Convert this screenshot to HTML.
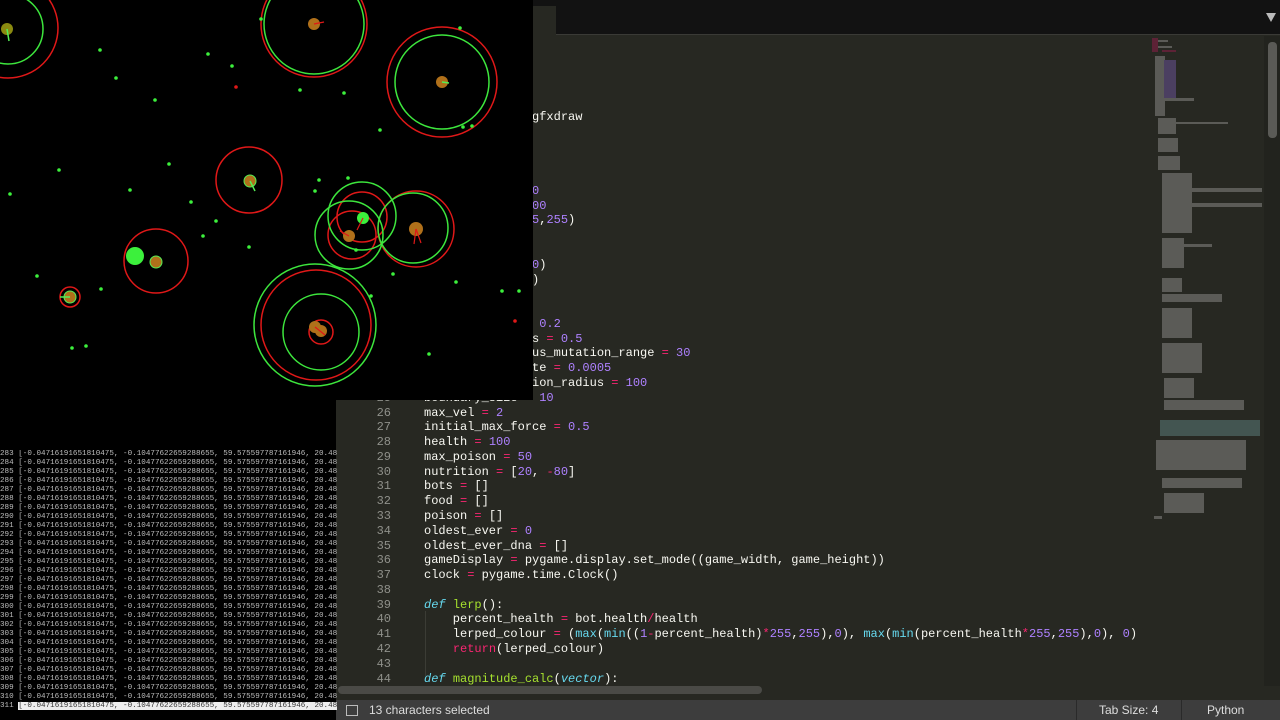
<!DOCTYPE html>
<html><head><meta charset="utf-8"><style>
*{margin:0;padding:0;box-sizing:border-box}
body{width:1280px;height:720px;overflow:hidden;background:#000;position:relative;font-family:"Liberation Mono",monospace}
#ed{position:absolute;left:336px;top:0;width:944px;height:720px;background:#272822}
#tabs{position:absolute;left:336px;top:0;width:944px;height:35px;background:#121212;border-bottom:1px solid #3a3a36}
#tab{position:absolute;left:190px;top:6px;width:30px;height:30px;background:#272822;border-radius:8px 0 0 0}
#arrow{position:absolute;right:4px;top:13px;width:0;height:0;border-left:5px solid transparent;border-right:5px solid transparent;border-top:9px solid #bbb}
#gut{position:absolute;left:336px;top:36px;width:55px;text-align:right;font-size:12px;line-height:14.78px;color:#8f908a;white-space:pre}
#code{position:absolute;left:424px;top:36px;font-size:12px;line-height:14.78px;color:#f8f8f2;white-space:pre}
.o{color:#f92672}.n{color:#ae81ff}.k{color:#66d9ef;font-style:italic}.f{color:#a6e22e}.b{color:#66d9ef}
#guide{position:absolute;left:425px;top:611px;width:1px;height:65px;background:#3b3c35}
#hs{position:absolute;left:338px;top:686px;width:424px;height:8px;border-radius:4px;background:#4a4a46}
#status{position:absolute;left:336px;top:700px;width:944px;height:20px;background:#3d3d3d;color:#ddd;font-family:"Liberation Sans",sans-serif;font-size:12px;line-height:20px}
#vs{position:absolute;left:1268px;top:42px;width:9px;height:96px;border-radius:4px;background:#5a5a56}
#vtrack{position:absolute;left:1264px;top:36px;width:16px;height:650px;background:#22231e}
#mini{position:absolute;left:1152px;top:38px;width:112px;height:490px;opacity:.35}
#game{position:absolute;left:0;top:0;width:533px;height:400px;background:#000}
#con{position:absolute;left:0;top:450px;width:337px;font-size:7.6px;line-height:9px;color:#bdbdbd;white-space:pre;overflow:hidden}
#con .sel{background:#eee;color:#333}
</style></head><body>
<div id="ed"></div>
<div id="tabs"><div id="tab"></div><div id="arrow"></div></div>
<div id="gut">1
2
3
4
5
6
7
8
9
10
11
12
13
14
15
16
17
18
19
20
21
22
23
24
25
26
27
28
29
30
31
32
33
34
35
36
37
38
39
40
41
42
43
44</div>
<div id="code"><span class="k">import</span> pygame
<span class="o">import</span> random
<span class="o">import</span> math
<span class="o">import</span> numpy
<span class="o">import</span> time
<span class="o">import</span> pygame, gfxdraw

pygame.init()

size <span class="o">=</span> <span class="n">1</span>
game_width <span class="o">=</span> <span class="n">800</span>
game_height <span class="o">=</span> <span class="n">600</span>
bg_colour <span class="o">=</span> (<span class="n">0</span>,<span class="n">5</span>,<span class="n">255</span>)

fps <span class="o">=</span> <span class="n">60</span>
red <span class="o">=</span> (<span class="n">255</span>,<span class="n">255</span>,<span class="n">0</span>)
green <span class="o">=</span> (<span class="n">0</span>,<span class="n">25</span>,<span class="n">0</span>)


mutation_rate <span class="o">=</span> <span class="n">0.2</span>
mutation_weights <span class="o">=</span> <span class="n">0.5</span>
perception_radius_mutation_range <span class="o">=</span> <span class="n">30</span>
reproduction_rate <span class="o">=</span> <span class="n">0.0005</span>
initial_perception_radius <span class="o">=</span> <span class="n">100</span>
boundary_size <span class="o">=</span> <span class="n">10</span>
max_vel <span class="o">=</span> <span class="n">2</span>
initial_max_force <span class="o">=</span> <span class="n">0.5</span>
health <span class="o">=</span> <span class="n">100</span>
max_poison <span class="o">=</span> <span class="n">50</span>
nutrition <span class="o">=</span> [<span class="n">20</span>, <span class="o">-</span><span class="n">80</span>]
bots <span class="o">=</span> []
food <span class="o">=</span> []
poison <span class="o">=</span> []
oldest_ever <span class="o">=</span> <span class="n">0</span>
oldest_ever_dna <span class="o">=</span> []
gameDisplay <span class="o">=</span> pygame.display.set_mode((game_width, game_height))
clock <span class="o">=</span> pygame.time.Clock()

<span class="k">def</span> <span class="f">lerp</span>():
    percent_health <span class="o">=</span> bot.health<span class="o">/</span>health
    lerped_colour <span class="o">=</span> (<span class="b">max</span>(<span class="b">min</span>((<span class="n">1</span><span class="o">-</span>percent_health)<span class="o">*</span><span class="n">255</span>,<span class="n">255</span>),<span class="n">0</span>), <span class="b">max</span>(<span class="b">min</span>(percent_health<span class="o">*</span><span class="n">255</span>,<span class="n">255</span>),<span class="n">0</span>), <span class="n">0</span>)
    <span class="o">return</span>(lerped_colour)

<span class="k">def</span> <span class="f">magnitude_calc</span>(<span class="k">vector</span>):</div>
<div id="guide"></div>
<div id="vtrack"></div><div id="vs"></div>
<svg id="mini" viewBox="0 0 112 490">
<g fill="#bbb">
<rect x="0" y="0" width="6" height="14" fill="#c2185b"/><rect x="6" y="2" width="10" height="2"/><rect x="6" y="8" width="14" height="2"/><rect x="10" y="12" width="14" height="2" fill="#c2185b"/>
<rect x="3" y="18" width="10" height="60"/><rect x="12" y="22" width="12" height="40" fill="#8e6bd6"/><rect x="12" y="60" width="30" height="3"/>
<rect x="6" y="80" width="18" height="16"/><rect x="16" y="84" width="60" height="2"/>
<rect x="6" y="100" width="20" height="14"/><rect x="6" y="118" width="22" height="14"/>
<rect x="10" y="135" width="30" height="60"/><rect x="30" y="150" width="80" height="4"/><rect x="30" y="165" width="80" height="4"/>
<rect x="10" y="200" width="22" height="30"/><rect x="20" y="206" width="40" height="3"/>
<rect x="10" y="240" width="20" height="14"/><rect x="10" y="256" width="60" height="8"/>
<rect x="10" y="270" width="30" height="30"/><rect x="10" y="305" width="40" height="30"/>
<rect x="12" y="340" width="30" height="20"/><rect x="12" y="362" width="80" height="10"/>
<rect x="8" y="382" width="100" height="16" fill="#7aa"/>
<rect x="4" y="402" width="90" height="30"/><rect x="10" y="440" width="80" height="10"/><rect x="12" y="455" width="40" height="20"/><rect x="2" y="478" width="8" height="3"/>
</g></svg>
<div id="hs"></div>
<div id="status"><span style="position:absolute;left:10px;top:5px;width:12px;height:11px;border:1px solid #bbb"></span><span style="position:absolute;left:33px">13 characters selected</span><span style="position:absolute;left:740px;top:0;width:1px;height:20px;background:#2a2a2a"></span><span style="position:absolute;left:763px">Tab Size: 4</span><span style="position:absolute;left:845px;top:0;width:1px;height:20px;background:#2a2a2a"></span><span style="position:absolute;left:871px">Python</span></div>
<svg id="game" viewBox="0 0 533 400" fill="none" stroke-width="1.5">
<g stroke="#e01818"><circle cx="8" cy="28" r="50"/><circle cx="314" cy="24" r="53"/><circle cx="442" cy="82" r="55"/><circle cx="249" cy="180" r="33"/><circle cx="156" cy="261" r="32"/><circle cx="70" cy="297" r="10"/><circle cx="352" cy="235" r="24"/><circle cx="362" cy="217" r="25"/><circle cx="416" cy="229" r="38"/><circle cx="316" cy="325" r="55"/><circle cx="321" cy="332" r="12"/></g>
<g stroke="#3de63d"><circle cx="8" cy="29" r="35"/><circle cx="314" cy="24" r="50"/><circle cx="442" cy="82" r="47"/><circle cx="349" cy="235" r="34"/><circle cx="362" cy="216" r="34"/><circle cx="413" cy="228" r="35"/><circle cx="315" cy="325" r="61"/><circle cx="321" cy="332" r="38"/></g>
<g fill="#b0701a"><circle cx="7" cy="29" r="6" fill="#8a8a10"/><circle cx="314" cy="24" r="6"/><circle cx="442" cy="82" r="6"/><circle cx="250" cy="181" r="6" stroke="#5e5" stroke-width="1"/><circle cx="156" cy="262" r="6" stroke="#5e5" stroke-width="1"/><circle cx="70" cy="297" r="6" stroke="#5e5" stroke-width="1"/><circle cx="349" cy="236" r="6"/><circle cx="416" cy="229" r="7"/><circle cx="315" cy="327" r="6"/><circle cx="321" cy="331" r="6"/></g>
<g fill="#3cf03c"><circle cx="135" cy="256" r="9"/><circle cx="363" cy="218" r="6"/>
<g><circle cx="100" cy="50" r="1.8"/><circle cx="116" cy="78" r="1.8"/><circle cx="208" cy="54" r="1.8"/><circle cx="232" cy="66" r="1.8"/><circle cx="155" cy="100" r="1.8"/><circle cx="300" cy="90" r="1.8"/><circle cx="344" cy="93" r="1.8"/><circle cx="261" cy="19" r="1.8"/><circle cx="460" cy="28" r="1.8"/><circle cx="380" cy="130" r="1.8"/><circle cx="463" cy="127" r="1.8"/><circle cx="472" cy="126" r="1.8"/><circle cx="59" cy="170" r="1.8"/><circle cx="169" cy="164" r="1.8"/><circle cx="10" cy="194" r="1.8"/><circle cx="130" cy="190" r="1.8"/><circle cx="191" cy="202" r="1.8"/><circle cx="216" cy="221" r="1.8"/><circle cx="203" cy="236" r="1.8"/><circle cx="249" cy="247" r="1.8"/><circle cx="319" cy="180" r="1.8"/><circle cx="348" cy="178" r="1.8"/><circle cx="315" cy="191" r="1.8"/><circle cx="356" cy="250" r="1.8"/><circle cx="393" cy="274" r="1.8"/><circle cx="456" cy="282" r="1.8"/><circle cx="37" cy="276" r="1.8"/><circle cx="101" cy="289" r="1.8"/><circle cx="371" cy="296" r="1.8"/><circle cx="502" cy="291" r="1.8"/><circle cx="72" cy="348" r="1.8"/><circle cx="86" cy="346" r="1.8"/><circle cx="429" cy="354" r="1.8"/><circle cx="519" cy="291" r="1.8"/></g></g>
<g fill="#e01818"><circle cx="236" cy="87" r="1.8"/><circle cx="515" cy="321" r="1.8"/></g>
<g stroke="#5e5" stroke-width="1.5"><line x1="7" y1="29" x2="9" y2="41"/><line x1="250" y1="181" x2="255" y2="191"/><line x1="442" y1="82" x2="449" y2="83"/><line x1="70" y1="297" x2="60" y2="297"/></g>
<g stroke="#e01818" stroke-width="1.2"><line x1="314" y1="24" x2="324" y2="22"/><line x1="416" y1="229" x2="421" y2="243"/><line x1="416" y1="229" x2="414" y2="244"/><line x1="349" y1="236" x2="340" y2="231"/><line x1="363" y1="218" x2="357" y2="230"/><line x1="315" y1="327" x2="325" y2="335"/></g>
</svg>
<div id="con">283 [-0.04716191651810475, -0.10477622659288655, 59.575597787161946, 20.487
284 [-0.04716191651810475, -0.10477622659288655, 59.575597787161946, 20.487
285 [-0.04716191651810475, -0.10477622659288655, 59.575597787161946, 20.487
286 [-0.04716191651810475, -0.10477622659288655, 59.575597787161946, 20.487
287 [-0.04716191651810475, -0.10477622659288655, 59.575597787161946, 20.487
288 [-0.04716191651810475, -0.10477622659288655, 59.575597787161946, 20.487
289 [-0.04716191651810475, -0.10477622659288655, 59.575597787161946, 20.487
290 [-0.04716191651810475, -0.10477622659288655, 59.575597787161946, 20.487
291 [-0.04716191651810475, -0.10477622659288655, 59.575597787161946, 20.487
292 [-0.04716191651810475, -0.10477622659288655, 59.575597787161946, 20.487
293 [-0.04716191651810475, -0.10477622659288655, 59.575597787161946, 20.487
294 [-0.04716191651810475, -0.10477622659288655, 59.575597787161946, 20.487
295 [-0.04716191651810475, -0.10477622659288655, 59.575597787161946, 20.487
296 [-0.04716191651810475, -0.10477622659288655, 59.575597787161946, 20.487
297 [-0.04716191651810475, -0.10477622659288655, 59.575597787161946, 20.487
298 [-0.04716191651810475, -0.10477622659288655, 59.575597787161946, 20.487
299 [-0.04716191651810475, -0.10477622659288655, 59.575597787161946, 20.487
300 [-0.04716191651810475, -0.10477622659288655, 59.575597787161946, 20.487
301 [-0.04716191651810475, -0.10477622659288655, 59.575597787161946, 20.487
302 [-0.04716191651810475, -0.10477622659288655, 59.575597787161946, 20.487
303 [-0.04716191651810475, -0.10477622659288655, 59.575597787161946, 20.487
304 [-0.04716191651810475, -0.10477622659288655, 59.575597787161946, 20.487
305 [-0.04716191651810475, -0.10477622659288655, 59.575597787161946, 20.487
306 [-0.04716191651810475, -0.10477622659288655, 59.575597787161946, 20.487
307 [-0.04716191651810475, -0.10477622659288655, 59.575597787161946, 20.487
308 [-0.04716191651810475, -0.10477622659288655, 59.575597787161946, 20.487
309 [-0.04716191651810475, -0.10477622659288655, 59.575597787161946, 20.487
310 [-0.04716191651810475, -0.10477622659288655, 59.575597787161946, 20.487
311 <span class="sel">[-0.04716191651810475, -0.10477622659288655, 59.575597787161946, 20.487</span></div>
</body></html>
